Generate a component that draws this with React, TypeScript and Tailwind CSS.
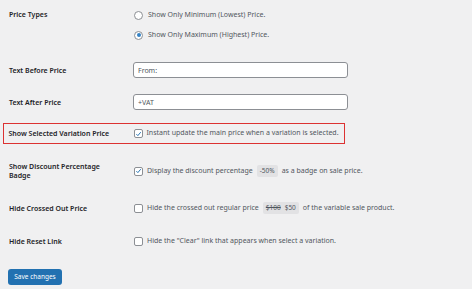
const font = { fontFamily: '"Noto Sans", "Open Sans", sans-serif' };

function Radio({ checked, label }: { checked?: boolean; label: string }) {
  return (
    <div className="flex h-[10px] items-center gap-[5px]">
      <span className="flex h-[9px] w-[9px] items-center justify-center rounded-full border border-[#8c8f94] bg-white">
        {checked && <span className="h-[4px] w-[4px] rounded-full bg-[#3582c4]" />}
      </span>
      <span>{label}</span>
    </div>
  );
}

function Checkbox({ checked }: { checked?: boolean }) {
  return (
    <span className="flex h-[9px] w-[9px] shrink-0 items-center justify-center rounded-[2px] border border-[#8c8f94] bg-white">
      {checked && (
        <svg viewBox="0 0 10 10" className="h-[8px] w-[8px]">
          <path d="M2 5.2 L4.1 7.3 L8.2 2.4" fill="none" stroke="#2271b1" strokeWidth="1.4" />
        </svg>
      )}
    </span>
  );
}

function Label({ children }: { children: React.ReactNode }) {
  return <div className="w-[124px] shrink-0 font-semibold leading-[9px] text-[#1d2327]">{children}</div>;
}

export default function App() {
  return (
    <div className="h-[294px] w-[474px] bg-white" style={font}>
      <div className="flex h-[289px] w-[472px] flex-col bg-[#f0f0f1] text-[7px] text-[#50575e]">
        {/* price types */}
        <div className="flex h-[54px] items-start pl-[9px] pt-[10px]">
          <Label>Price Types</Label>
          <div className="flex flex-col gap-[10px] pl-[1px]">
            <Radio label="Show Only Minimum (Lowest) Price." />
            <Radio checked label="Show Only Maximum (Highest) Price." />
          </div>
        </div>

        <div className="flex h-[32px] items-center pl-[9px]">
          <Label>Text Before Price</Label>
          <input
            readOnly
            value="From:"
            className="h-[16px] w-[215px] rounded-[3px] border border-[#8c8f94] bg-white px-[4px] text-[7px] text-[#50575e] outline-none"
          />
        </div>

        <div className="flex h-[32px] items-center pl-[9px]">
          <Label>Text After Price</Label>
          <input
            readOnly
            value="+VAT"
            className="h-[16px] w-[215px] rounded-[3px] border border-[#8c8f94] bg-white px-[4px] text-[7px] text-[#50575e] outline-none"
          />
        </div>

        {/* highlighted row */}
        <div className="ml-[3px] mt-[5px] flex h-[21px] w-[342px] items-center border-[1.5px] border-[#dc3232] pl-[4.5px]">
          <Label>Show Selected Variation Price</Label>
          <div className="flex items-center gap-[4px] pl-[1px]">
            <Checkbox checked />
            <span>Instant update the main price when a variation is selected.</span>
          </div>
        </div>

        <div className="flex h-[54px] items-center pl-[9px]">
          <Label>
            Show Discount Percentage
            <br />
            Badge
          </Label>
          <div className="flex items-center gap-[4px] pl-[1px]">
            <Checkbox checked />
            <span>Display the discount percentage</span>
            <span className="rounded-[2px] bg-[#e2e2e4] px-[3px] py-[1px] text-[6.5px]">-50%</span>
            <span>as a badge on sale price.</span>
          </div>
        </div>

        <div className="flex h-[20px] items-center pl-[9px]">
          <Label>Hide Crossed Out Price</Label>
          <div className="flex items-center gap-[4px] pl-[1px]">
            <Checkbox />
            <span>Hide the crossed out regular price</span>
            <span className="flex gap-[4px] rounded-[2px] bg-[#e2e2e4] px-[3px] py-[1px] text-[6.5px]">
              <span className="line-through">$100</span>
              <span>$50</span>
            </span>
            <span>of the variable sale product.</span>
          </div>
        </div>

        <div className="flex h-[46px] items-center pl-[9px]">
          <Label>Hide Reset Link</Label>
          <div className="flex items-center gap-[4px] pl-[1px]">
            <Checkbox />
            <span>Hide the "Clear" link that appears when select a variation.</span>
          </div>
        </div>

        <div className="mt-[5px] pl-[8px]">
          <button className="h-[16px] w-[54px] rounded-[3px] bg-[#2271b1] text-[6.5px] text-white">Save changes</button>
        </div>
      </div>
    </div>
  );
}
